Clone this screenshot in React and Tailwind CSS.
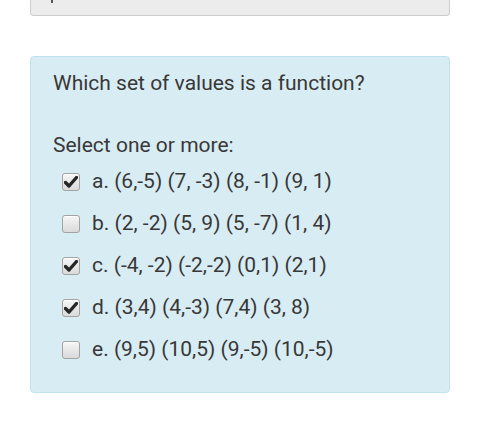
import React from 'react';

const options = [
  { label: 'a. (6,-5) (7, -3) (8, -1) (9, 1)', checked: true },
  { label: 'b. (2, -2) (5, 9) (5, -7) (1, 4)', checked: false },
  { label: 'c. (-4, -2) (-2,-2) (0,1) (2,1)', checked: true },
  { label: 'd. (3,4) (4,-3) (7,4) (3, 8)', checked: true },
  { label: 'e. (9,5) (10,5) (9,-5) (10,-5)', checked: false },
];

const Checkbox = ({ checked }) => (
  <span className="flex h-[18px] w-[18px] shrink-0 items-center justify-center rounded-[3px] border border-[#a3a3a3] bg-gradient-to-b from-[#f6f6f6] to-[#dadada] shadow-[inset_0_1px_0_#fff]">
    {checked && (
      <svg width="14" height="12" viewBox="0 0 14 12">
        <path d="M1.5 6.5 L5 10 L12.5 1.5" fill="none" stroke="#262626" strokeWidth="3.4" strokeLinecap="round" strokeLinejoin="round" />
      </svg>
    )}
  </span>
);

export default function App() {
  return (
    <div className="min-h-[431px] bg-white font-['Roboto',sans-serif] text-[#383838]">
      {/* previous panel, scrolled off the top */}
      <div className="mx-[30px] h-[16px] rounded-b-[4px] border border-t-0 border-[#cdcdcd] bg-[#ececec] pl-[20px]">
        <span className="block h-[3px] w-[2px] bg-[#555]" />
      </div>

      <div className="mx-[30px] mt-[40px] h-[337px] rounded-[4px] border border-[#bfe3ec] bg-[#d8ecf3] pl-[22px] pt-[13px]">
        <p className="text-[21px] leading-[26px]">Which set of values is a function?</p>
        <p className="mt-[36px] text-[21px] leading-[26px]">Select one or more:</p>
        <div className="mt-[3px] flex flex-col">
          {options.map((o) => (
            <label key={o.label} className="flex h-[42px] items-center gap-[12px] pl-[9px] text-[21px]">
              <Checkbox checked={o.checked} />
              <span>{o.label}</span>
            </label>
          ))}
        </div>
      </div>
    </div>
  );
}
